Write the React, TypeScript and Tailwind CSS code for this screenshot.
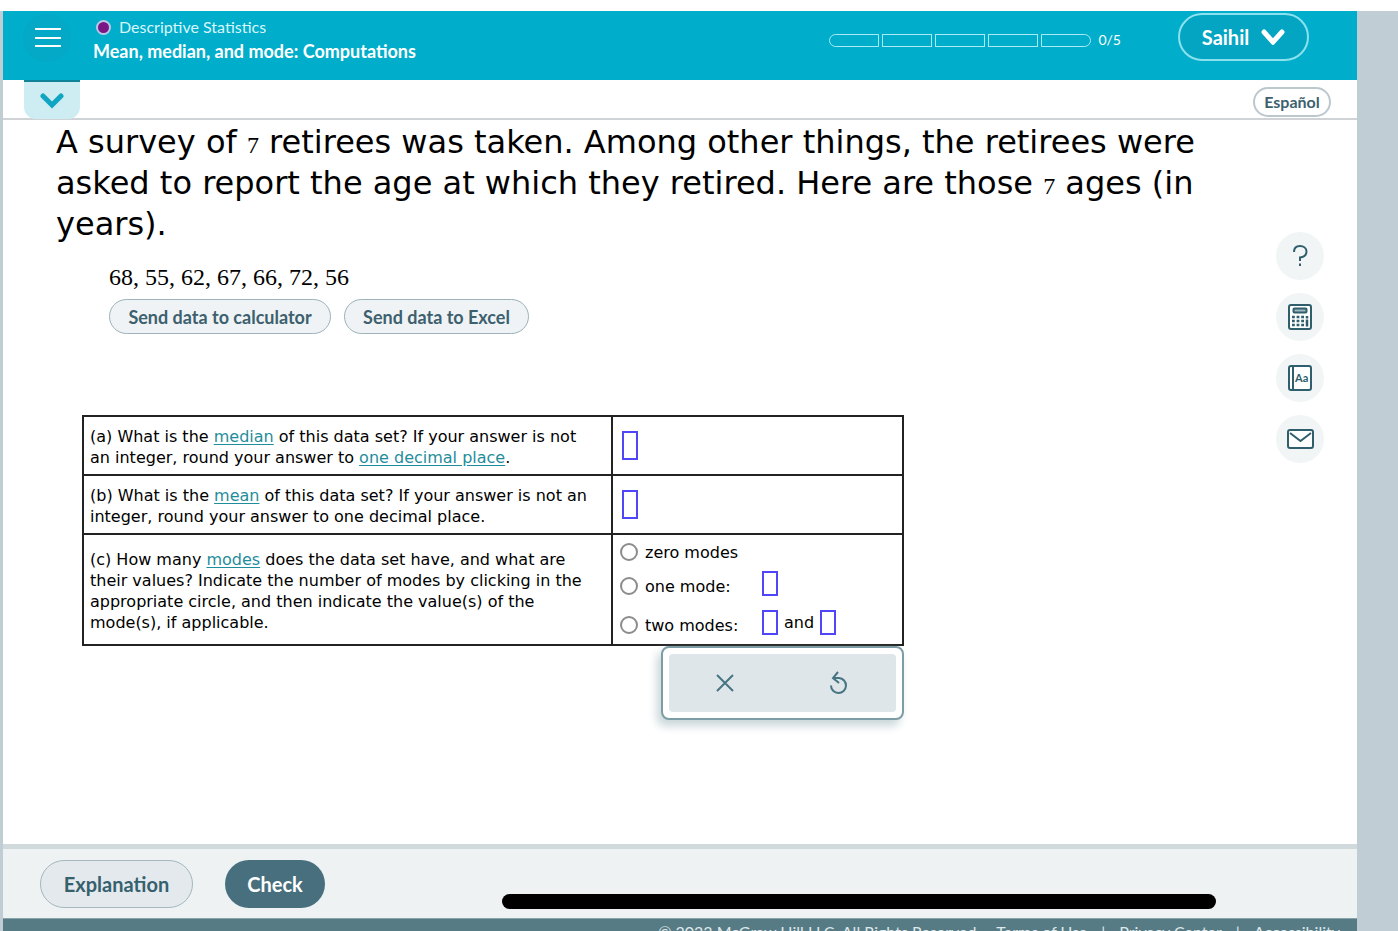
import { ReactNode } from 'react';

const segments = [
	'rounded-l-full',
	'',
	'',
	'',
	'rounded-r-full',
];

function Chevron({ className }: { className: string }) {
	return (
		<svg className={className} viewBox="0 0 24 16" fill="none" aria-hidden="true">
			<path
				d="M3 3l9 9 9-9"
				stroke="currentColor"
				strokeWidth="5"
				strokeLinecap="round"
				strokeLinejoin="miter"
			/>
		</svg>
	);
}

function Header() {
	return (
		<header className="flex h-[69px] shrink-0 items-start bg-[#00adca] pr-12 pl-5 text-white">
			<button
				aria-label="Menu"
				className="mt-[3px] flex h-12 w-12 shrink-0 items-center justify-center rounded-full bg-[#03a9c6]"
			>
				<svg className="ml-px h-6 w-7" viewBox="0 0 28 24" aria-hidden="true">
					<path d="M1 3h26M1 12h26M1 20h26" stroke="currentColor" strokeWidth="2" />
				</svg>
			</button>
			<div className="mt-1 ml-[22px] flex-1">
				<div className="flex h-6 items-center gap-2 pl-[3px] text-base text-[#d9f6fb]">
					<span className="h-[15px] w-[15px] rounded-full border-2 border-[#b9c8e6] bg-[#7b1685]"></span>
					Descriptive Statistics
				</div>
				<h1 className="text-lg leading-6 font-bold">Mean, median, and mode: Computations</h1>
			</div>
			<div className="mt-[19px] mr-[57px] flex items-center gap-[7px]">
				<div className="flex gap-[3px]">
					{segments.map((shape, i) => (
						<span
							key={i}
							className={`h-[13px] w-[50px] border border-[#a9eaf4] ${shape}`}
						></span>
					))}
				</div>
				<span className="text-sm leading-5">0/5</span>
			</div>
			<button className="mt-[2px] flex h-12 w-[131px] items-center justify-center gap-3 rounded-full border-2 border-[#8be2ef] bg-[#04a5c2] text-xl font-bold">
				Saihil
				<svg className="h-4 w-6" viewBox="0 0 24 16" fill="none" aria-hidden="true">
					<path d="M3 3l9 10 9-10" stroke="currentColor" strokeWidth="5" strokeLinecap="round" />
				</svg>
			</button>
		</header>
	);
}

function SideButton({ label, children }: { label: string; children: ReactNode }) {
	return (
		<button
			aria-label={label}
			className="flex h-12 w-12 items-center justify-center rounded-full bg-[#f1f5f6] text-[#2f5f6d]"
		>
			{children}
		</button>
	);
}

function SideTools() {
	return (
		<aside className="flex flex-col gap-[13px] pt-28 pr-[33px]">
			<SideButton label="Help">
				<svg className="h-6 w-6" viewBox="0 0 24 24" fill="none" stroke="currentColor" strokeWidth="2">
					<path d="M6 8c0-4 2.500-6 6-6s6.500 2 6.500 5.500c0 4-2.500 5.500-6.500 6V17" />
					<path d="M12 19.500v2.500" />
				</svg>
			</SideButton>
			<SideButton label="Calculator">
				<svg className="h-[26px] w-6" viewBox="0 0 24 26" fill="none" stroke="currentColor" strokeWidth="2">
					<rect x="1" y="1" width="22" height="24" rx="2" fill="white" />
					<rect x="5.500" y="4.500" width="13" height="4" rx="1" fill="#9fb6bd" />
					<path d="M4 13h12M4 17h12M4 21h12" strokeWidth="2.500" strokeDasharray="2.800 1.800" />
					<path d="M19 12v2.500M19 15.500v7" strokeWidth="2.500" />
				</svg>
			</SideButton>
			<SideButton label="Dictionary">
				<svg className="h-[26px] w-6" viewBox="0 0 24 26" fill="none" stroke="currentColor" strokeWidth="2">
					<rect x="1" y="1" width="22" height="24" rx="2" fill="white" />
					<path d="M5 1v24" />
					<text
						x="7"
						y="17"
						fontSize="11"
						fontWeight="bold"
						fontFamily="Lato, sans-serif"
						fill="currentColor"
						stroke="none"
					>
						Aa
					</text>
				</svg>
			</SideButton>
			<SideButton label="Message">
				<svg className="h-5 w-[27px]" viewBox="0 0 27 20" fill="none" stroke="currentColor" strokeWidth="2">
					<rect x="1" y="1" width="25" height="18" rx="2" fill="white" />
					<path d="M3 4l10.500 8L24 4" />
				</svg>
			</SideButton>
		</aside>
	);
}

function AnswerBox({ label, short }: { label: string; short?: boolean }) {
	return (
		<input
			type="text"
			aria-label={label}
			className={
				short
					? 'mb-[6px] block h-[25px] w-4 border-2 border-[#4f46fa] bg-white'
					: 'block h-[29px] w-4 border-2 border-[#4f46fa] bg-white'
			}
		/>
	);
}

function ModeOption({ id, label, children }: { id: string; label: string; children?: ReactNode }) {
	return (
		<div className="flex items-center">
			<input
				type="radio"
				name="modes"
				id={id}
				className="h-[18px] w-[18px] appearance-none rounded-full border-2 border-[#8c8c8c] bg-white checked:border-[5px]"
			/>
			<label htmlFor={id} className="ml-[7px] w-[117px] whitespace-nowrap">
				{label}
			</label>
			{children}
		</div>
	);
}

function Term({ children }: { children: ReactNode }) {
	return (
		<a href="#" className="text-[#1f8d9b] underline underline-offset-2">
			{children}
		</a>
	);
}

function Seven() {
	return <span className="font-['Liberation_Serif',serif] text-2xl leading-none">7</span>;
}

function Questions() {
	return (
		<table className="w-full table-fixed border-collapse border-2 border-[#222] font-['DejaVu_Sans',sans-serif] text-base leading-[21px]">
			<colgroup>
				<col className="w-[529px]" />
				<col />
			</colgroup>
			<tbody>
				<tr className="h-[59px]">
					<td className="border-2 border-[#222] pt-[3px] pl-[6px]">
						(a) What is the <Term>median</Term> of this data set? If your answer is not
						<br />
						an integer, round your answer to <Term>one decimal place</Term>.
					</td>
					<td className="border-2 border-[#222] px-[9px]">
						<AnswerBox label="Median" />
					</td>
				</tr>
				<tr className="h-[59px]">
					<td className="border-2 border-[#222] pt-[3px] pl-[6px]">
						(b) What is the <Term>mean</Term> of this data set? If your answer is not an
						<br />
						integer, round your answer to one decimal place.
					</td>
					<td className="border-2 border-[#222] px-[9px]">
						<AnswerBox label="Mean" />
					</td>
				</tr>
				<tr className="h-[111px]">
					<td className="border-2 border-[#222] pt-[3px] pl-[6px]">
						(c) How many <Term>modes</Term> does the data set have, and what are
						<br />
						their values? Indicate the number of modes by clicking in the
						<br />
						appropriate circle, and then indicate the value(s) of the
						<br />
						mode(s), if applicable.
					</td>
					<td className="border-2 border-[#222] px-[7px] pt-[3px]">
						<div className="flex flex-col gap-[8px]">
							<ModeOption id="zero" label="zero modes" />
							<ModeOption id="one" label="one mode:">
								<AnswerBox label="Mode" short />
							</ModeOption>
							<ModeOption id="two" label="two modes:">
								<AnswerBox label="First mode" short />
								<span className="mx-[6px] mb-[6px]">and</span>
								<AnswerBox label="Second mode" short />
							</ModeOption>
						</div>
					</td>
				</tr>
			</tbody>
		</table>
	);
}

function AnswerTools() {
	return (
		<div className="ml-auto w-[243px] rounded-lg border-2 border-[#7d9da6] bg-white p-[6px] shadow-[-4px_6px_10px_#c9d6da]">
			<div className="flex h-[58px] items-center justify-around rounded bg-[#dfe6e9] text-[#467482]">
				<button aria-label="Clear" className="p-2">
					<svg className="h-[18px] w-[18px]" viewBox="0 0 18 18" stroke="currentColor" strokeWidth="2">
						<path d="M1 1l16 16M17 1L1 17" />
					</svg>
				</button>
				<button aria-label="Undo" className="p-2">
					<svg
						className="h-6 w-5"
						viewBox="0 0 20 24"
						fill="none"
						stroke="currentColor"
						strokeWidth="2"
					>
						<path d="M9 1L4 7l6 5" />
						<path d="M4 7h6a7.500 7.500 0 1 1-8 7.500" />
					</svg>
				</button>
			</div>
		</div>
	);
}

function Footer() {
	return (
		<footer className="flex h-[13px] shrink-0 items-start justify-end overflow-hidden border-t border-[#88a4ab] bg-[#577b85] pt-[3px] pr-[17px] text-base leading-5 whitespace-nowrap text-[#dfe8ea]">
			<span>© 2023 McGraw Hill LLC. All Rights Reserved.</span>
			<a href="#" className="ml-4">
				Terms of Use
			</a>
			<span className="mx-[14px]">|</span>
			<a href="#">Privacy Center</a>
			<span className="mx-[14px]">|</span>
			<a href="#">Accessibility</a>
		</footer>
	);
}

function App() {
	return (
		<div className="flex h-screen flex-col overflow-hidden bg-white pt-[11px] font-['Lato',sans-serif]">
			<div className="flex min-h-0 flex-1 flex-col border-r-[41px] border-l-[3px] border-[#c0cdd4] bg-white">
				<Header />
				<div className="flex h-10 shrink-0 items-start justify-between border-b-2 border-[#cfd3d5] pr-[26px] pl-[21px]">
					<button
						aria-label="Expand"
						className="flex h-[39px] w-14 items-center justify-center rounded-b-xl border-t-2 border-[#108397] bg-[#cdedf3] text-[#10a5c2]"
					>
						<Chevron className="h-4 w-6" />
					</button>
					<button className="mt-[7px] h-[30px] w-[78px] rounded-full border-2 border-[#bcc8ce] text-base leading-5 font-bold text-[#3d606e]">
						Español
					</button>
				</div>

				<div className="flex min-h-0 flex-1 items-start justify-between text-black">
					<main className="pl-[53px]">
						<p className="max-w-[1170px] pt-[2px] font-['DejaVu_Sans',sans-serif] text-[32px] leading-[41px]">
							A survey of <Seven /> retirees was taken. Among other things, the retirees were
							<br />
							asked to report the age at which they retired. Here are those <Seven /> ages (in
							<br />
							years).
						</p>
						<div className="mt-4 pl-[53px]">
							<p className="font-['Liberation_Serif',serif] text-2xl leading-8">
								68, 55, 62, 67, 66, 72, 56
							</p>
							<div className="mt-[6px] flex gap-[13px] text-lg leading-none font-bold text-[#3d606e]">
								<button className="h-[35px] w-[222px] rounded-full border border-[#9db2ba] bg-[#eff3f5]">
									Send data to calculator
								</button>
								<button className="h-[35px] w-[185px] rounded-full border border-[#9db2ba] bg-[#eff3f5]">
									Send data to Excel
								</button>
							</div>
						</div>
						<div className="mt-[81px] ml-[26px] w-[822px]">
							<Questions />
							<AnswerTools />
						</div>
					</main>
					<SideTools />
				</div>

				<div className="flex h-[74px] shrink-0 items-center gap-8 border-t-[5px] border-[#d0d9dc] bg-[#eef2f3] pl-[37px] text-xl font-bold">
					<button className="h-12 w-[153px] rounded-full border border-[#a5b8bf] bg-[#e3e9ec] text-[#35606e]">
						Explanation
					</button>
					<button className="h-12 w-[100px] rounded-full bg-[#476f7e] text-white">Check</button>
				</div>
				<Footer />
			</div>
			<div className="fixed bottom-[22px] left-[502px] h-[15px] w-[714px] rounded-full bg-black"></div>
		</div>
	);
}

export default App;
